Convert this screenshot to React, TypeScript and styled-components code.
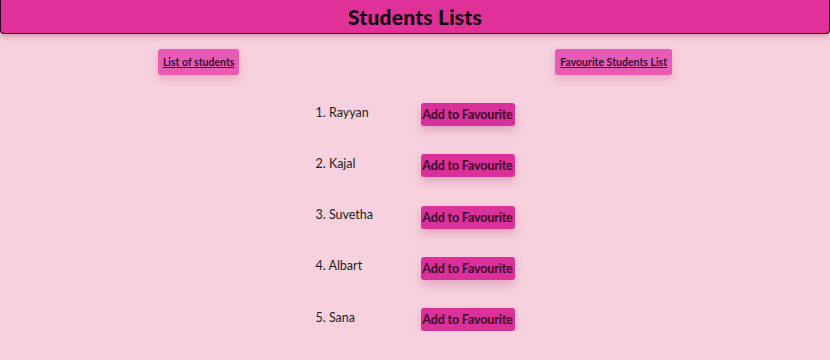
import styled, { createGlobalStyle } from "styled-components";

const GlobalStyle = createGlobalStyle`
  body {
    margin: 0;
    background-color: #f8d1de;
    font-family: Lato, "Noto Sans", sans-serif;
    color: #1c1c1c;
  }
`;

const Header = styled.header`
  height: 33px;
  background-color: #df3198;
  border: 1px solid #2a0a1e;
  border-top: none;
  border-radius: 0 0 4px 4px;
  box-shadow: 0 2px 6px rgba(120, 20, 70, 0.35);
  display: flex;
  align-items: center;
  justify-content: center;
  h1 {
    margin: 0;
    font-size: 21px;
    font-weight: 900;
    color: #12040c;
    letter-spacing: 0.2px;
  }
`;

const Nav = styled.nav`
  display: flex;
  justify-content: space-around;
  margin-top: 15px;
`;

const NavLink = styled.a`
  display: block;
  padding: 6px 5px 5px;
  background-color: #e65bb5;
  border-radius: 3px;
  font-size: 10.5px;
  font-weight: 700;
  color: #3a0a35;
  text-decoration: underline;
  box-shadow: 0 4px 8px rgba(170, 60, 110, 0.25);
  line-height: 15px;
  cursor: pointer;
`;

const List = styled.ul`
  list-style: none;
  margin: 28px 0 0;
  padding: 0;
  display: flex;
  flex-direction: column;
  align-items: center;
  gap: 28.3px;
`;

const Row = styled.li`
  display: grid;
  grid-template-columns: 105px 94px;
  align-items: center;
`;

const Name = styled.span`
  font-size: 12.5px;
  color: #1e1e1e;
  margin-top: -5px;
`;

const AddButton = styled.button`
  font-family: inherit;
  font-size: 12.6px;
  font-weight: 700;
  letter-spacing: -0.2px;
  color: #3b0b2c;
  background-color: #d9309a;
  border: none;
  border-radius: 3px;
  padding: 0;
  width: 94px;
  height: 23px;
  white-space: nowrap;
  box-shadow: 0 5px 8px rgba(160, 50, 100, 0.25);
  cursor: pointer;
`;

const students = ["Rayyan", "Kajal", "Suvetha", "Albart", "Sana"];

function App() {
  return (
    <>
      <GlobalStyle />
      <Header>
        <h1>Students Lists</h1>
      </Header>
      <Nav>
        <NavLink>List of students</NavLink>
        <NavLink>Favourite Students List</NavLink>
      </Nav>
      <List>
        {students.map((name, i) => (
          <Row key={name}>
            <Name>
              {i + 1}. {name}
            </Name>
            <AddButton>Add to Favourite</AddButton>
          </Row>
        ))}
      </List>
    </>
  );
}

export default App;
